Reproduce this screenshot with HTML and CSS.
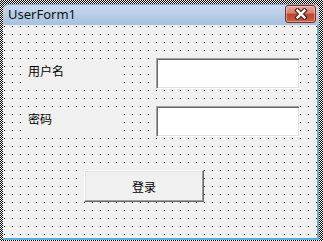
FILE: index.html
```html
<!DOCTYPE html>
<html>
<head lang="zh">
    <meta charset="UTF-8">
    <title>UserForm1</title>
    <link rel="stylesheet" href="styles.css">
</head>
<body>
<div class="sel">
    <div class="win">
        <div class="cap">
            <span class="cap-text">UserForm1</span>
            <span class="close">
                <svg width="16" height="12" viewBox="0 0 16 12">
                    <path d="M4.5 2.5 L11.5 9.5 M11.5 2.5 L4.5 9.5" stroke="#4a2a26" stroke-width="4.6" stroke-linecap="square"/>
                    <path d="M4.5 2.5 L11.5 9.5 M11.5 2.5 L4.5 9.5" stroke="#fff" stroke-width="2.4" stroke-linecap="square"/>
                </svg>
            </span>
        </div>
        <div class="client">
            <div class="row">
                <div class="lbl">用户名</div>
                <div class="txt"></div>
            </div>
            <div class="row">
                <div class="lbl">密码</div>
                <div class="txt"></div>
            </div>
            <div class="btn">登录</div>
        </div>
    </div>
</div>
</body>
</html>
```

FILE: styles.css
```css
* {
    margin: 0;
    padding: 0;
    box-sizing: border-box;
}

body {
    width: 323px;
    height: 241px;
    overflow: hidden;
    background: #fff;
}

/* designer selection hatch */
.sel {
    width: 323px;
    height: 241px;
    padding: 4px 4px 1px 3px;
    background: repeating-conic-gradient(#000 0 25%, #fff 0 50%) 0 0 / 2px 2px;
}

.win {
    width: 316px;
    height: 236px;
    display: flex;
    flex-direction: column;
}

.cap {
    height: 21px;
    display: flex;
    align-items: flex-start;
    justify-content: space-between;
    padding: 0 3px 0 5px;
    border-radius: 5px 5px 0 0;
    background: linear-gradient(#c6d9ee, #b3cbe5 60%, #a7c1df);
    border-top: 1px solid #8fa9c8;
}

.cap-text {
    font-family: "Noto Sans", "Liberation Sans", sans-serif;
    font-size: 13px;
    line-height: 19px;
    color: #111;
}

.close {
    width: 31px;
    height: 18px;
    display: flex;
    align-items: center;
    justify-content: center;
    border: 1px solid #7e3228;
    border-radius: 3px;
    background: linear-gradient(#e6a597, #d57d6b 45%, #c2412c 50%, #cf5f45);
    box-shadow: inset 0 0 0 1px rgba(255, 220, 210, .45);
}

.client {
    flex: 1;
    display: flex;
    flex-direction: column;
    align-items: flex-start;
    padding: 33px 0 0 19px;
    border-right: 2px solid #4fb2e2;
    border-bottom: 2px solid #4fb2e2;
    background: linear-gradient(90deg, transparent 1px, #f0f0f0 1px) 1px 1px / 8px 8px,
                linear-gradient(transparent 1px, #f0f0f0 1px) 1px 1px / 8px 8px,
                #000;
    font-family: "Noto Sans CJK SC", sans-serif;
    font-size: 12px;
    color: #000;
}

.row {
    display: flex;
    gap: 33px;
    margin-bottom: 17px;
}

.lbl {
    width: 101px;
    height: 30px;
    margin-top: 1px;
    padding: 4px 0 0 6px;
    background: #f0f0f0;
    line-height: 16px;
}

.txt {
    width: 144px;
    height: 31px;
    background: #fff;
    border: 1px solid;
    border-color: #a0a0a0 #fff #fff #a0a0a0;
    box-shadow: inset 1px 1px #696969, inset -1px -1px #e3e3e3;
}

.btn {
    width: 120px;
    height: 32px;
    margin: 16px 0 0 62px;
    display: flex;
    align-items: center;
    justify-content: center;
    background: #f0f0f0;
    border: 1px solid;
    border-color: #fff #696969 #696969 #fff;
    box-shadow: inset -1px -1px #a0a0a0, inset 1px 1px #e3e3e3;
}
```
